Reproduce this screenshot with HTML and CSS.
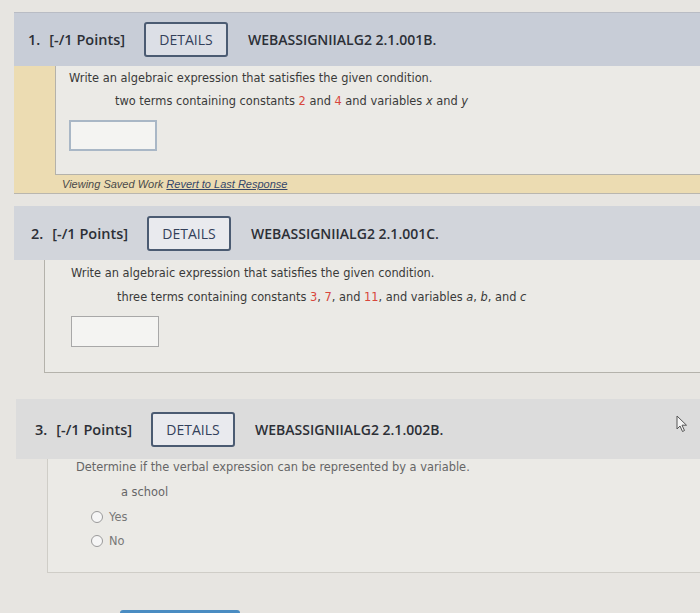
FILE: index.html
```html
<!DOCTYPE html>
<html>
<head>
<meta charset="utf-8">
<link rel="stylesheet" href="styles.css">
</head>
<body>
<div class="page">
  <section class="q q1">
    <div class="qhead hd1">
      <span class="qlabel"><span class="qnum">1.</span>[-/1 Points]</span>
      <span class="details">DETAILS</span>
      <span class="code">WEBASSIGNIIALG2 2.1.001B.</span>
    </div>
    <div class="qbody-wrap">
      <div class="qbody b1">
        <p class="prompt">Write an algebraic expression that satisfies the given condition.</p>
        <p class="cond">two terms containing constants <span class="num">2</span> and <span class="num">4</span> and variables <i>x</i> and <i>y</i></p>
        <div class="answer"></div>
      </div>
    </div>
    <div class="saved">Viewing Saved Work <a class="revert">Revert to Last Response</a></div>
  </section>

  <section class="q q2">
    <div class="qhead hd2">
      <span class="qlabel"><span class="qnum">2.</span>[-/1 Points]</span>
      <span class="details">DETAILS</span>
      <span class="code">WEBASSIGNIIALG2 2.1.001C.</span>
    </div>
    <div class="qbody b2">
      <p class="prompt">Write an algebraic expression that satisfies the given condition.</p>
      <p class="cond">three terms containing constants <span class="num">3</span>, <span class="num">7</span>, and <span class="num">11</span>, and variables <i>a</i>, <i>b</i>, and <i>c</i></p>
      <div class="answer"></div>
    </div>
  </section>

  <section class="q q3">
    <div class="qhead hd3">
      <span class="qlabel"><span class="qnum">3.</span>[-/1 Points]</span>
      <span class="details">DETAILS</span>
      <span class="code">WEBASSIGNIIALG2 2.1.002B.</span>
      <svg class="cursor" width="12" height="18" viewBox="0 0 12 18"><path d="M1 1 L1 14 L4 11 L6.5 16.5 L8.5 15.5 L6 10.2 L10.5 10.2 Z" fill="#f4f4f4" stroke="#555" stroke-width="1" stroke-linejoin="round"/></svg>
    </div>
    <div class="qbody b3">
      <p class="prompt light">Determine if the verbal expression can be represented by a variable.</p>
      <p class="cond light">a school</p>
      <label class="opt"><span class="radio"></span>Yes</label>
      <label class="opt"><span class="radio"></span>No</label>
    </div>
  </section>

  <div class="submit"></div>
</div>
</body>
</html>
```

FILE: styles.css
```css
html, body {
  margin: 0;
  padding: 0;
  background: #e7e5e1;
  overflow: hidden;
}
.page {
  padding-top: 12px;
  font-family: "DejaVu Sans", Verdana, sans-serif;
  color: #3a3a3a;
}
p { margin: 0; }

.q1 { margin-left: 14px; background: #ecdcb2; border-bottom: 1px solid #b9b6ae; }
.q2 { margin-left: 14px; margin-top: 12px; }
.q3 { margin-left: 16px; margin-top: 26px; }

.qhead {
  display: flex;
  align-items: center;
  font-family: "Open Sans", "Noto Sans", sans-serif;
  font-size: 14px;
  color: #2c2f36;
  position: relative;
}
.hd1 { height: 54px; padding-left: 14px; background: #c8cdd7; border-top: 1px solid #b9bcc4; box-sizing: border-box; }
.hd2 { height: 54px; padding-left: 17px; background: #d2d5db; }
.hd3 { height: 60px; padding-left: 19px; background: #dcdcdc; }

.qlabel { font-weight: 600; width: 116px; font-size: 14.5px; }
.qnum { margin-right: 9px; }
.details {
  box-sizing: border-box;
  width: 84px;
  height: 35px;
  border: 2px solid #4b5b72;
  border-radius: 3px;
  display: flex;
  align-items: center;
  justify-content: center;
  color: #33405a;
  background: #e9eaee;
}
.hd1 .details { background: #dcdfe6; }
.code { font-weight: 600; margin-left: 20px; }

.cursor { position: absolute; right: 12px; top: 16px; }

.qbody-wrap { padding-left: 41px; }
.qbody {
  background: #ebeae6;
  border-left: 1px solid #b4b2ab;
  border-bottom: 1px solid #b4b2ab;
  font-size: 11.4px;
  line-height: 16px;
  box-sizing: border-box;
}
.b1 { height: 109px; padding: 4px 0 0 13px; }
.b2 { height: 113px; margin-left: 30px; padding: 5px 0 0 26px; }
.b3 { height: 114px; margin-left: 31px; padding: 0 0 0 28px; border-color: #cfcdc7; }

.b1 .cond { margin-top: 7px; padding-left: 46px; }
.b2 .cond { margin-top: 8px; padding-left: 46px; }
.b3 .cond { margin-top: 9px; padding-left: 45px; }

.num { color: #d8463c; }
.light { color: #666; }

.answer {
  width: 88px;
  height: 31px;
  box-sizing: border-box;
  border: 2px solid #a9b7c6;
  background: #f4f4f2;
  margin-top: 11px;
}
.b2 .answer { border: 1px solid #a8a8a8; margin-top: 11px; }

.saved {
  height: 18px;
  line-height: 18px;
  padding-left: 48px;
  font-family: "Liberation Sans", Arial, sans-serif;
  font-style: italic;
  font-size: 11px;
  color: #4a4a4a;
}
.revert { color: #34466a; text-decoration: underline; }

.opt {
  display: flex;
  align-items: center;
  margin-top: 8px;
  padding-left: 15px;
  color: #777;
  height: 16px;
}
.b3 .cond + .opt { margin-top: 9px; }
.radio {
  width: 10px;
  height: 10px;
  border: 1px solid #9a9a9a;
  border-radius: 50%;
  background: #f6f6f6;
  margin-right: 6px;
}

.submit {
  margin-top: 37px;
  margin-left: 120px;
  width: 120px;
  height: 6px;
  background: #4a8cc2;
  border-radius: 3px 3px 0 0;
}
```
